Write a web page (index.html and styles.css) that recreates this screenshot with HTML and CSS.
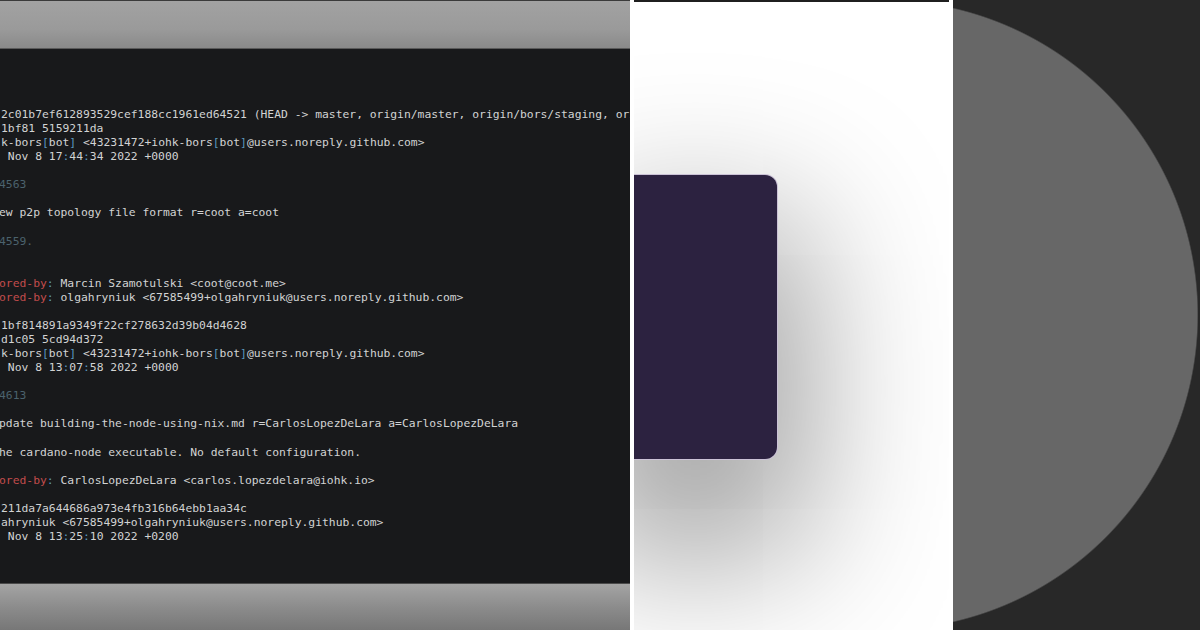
FILE: index.html
```
<!DOCTYPE html>
<html lang="en">
<head>
  <meta charset="UTF-8" />
  <meta name="viewport" content="width=device-width, initial-scale=1.0"/>
  <title>Strip</title>
  <link rel="stylesheet" href="styles.css">
</head>
<body>

  <div class="strip">

    <!-- Terminal shot -->
    <section class="shot term-shot">
      <div class="bar bar-top"></div>
<pre class="term">2c01b7ef612893529cef188cc1961ed64521 (HEAD -&gt; master, origin/master, origin/bors/staging, origin/HEAD)
1bf81 5159211da
k-bors<b>[</b>bot<b>]</b> &lt;43231472+iohk-bors<b>[</b>bot<b>]</b>@users.noreply.github.com&gt;
 Nov 8 17<b>:</b>44<b>:</b>34 2022 +0000

<span class="cut dim">4563</span>

<span class="cut">ew p2p topology file format r=coot a=coot</span>

<span class="cut dim">4559.</span>


<span class="cut"><i>ored-by</i><b>:</b> Marcin Szamotulski &lt;coot@coot.me&gt;</span>
<span class="cut"><i>ored-by</i><b>:</b> olgahryniuk &lt;67585499+olgahryniuk@users.noreply.github.com&gt;</span>

1bf814891a9349f22cf278632d39b04d4628
d1c05 5cd94d372
k-bors<b>[</b>bot<b>]</b> &lt;43231472+iohk-bors<b>[</b>bot<b>]</b>@users.noreply.github.com&gt;
 Nov 8 13<b>:</b>07<b>:</b>58 2022 +0000

<span class="cut dim">4613</span>

<span class="cut">pdate building-the-node-using-nix.md r=CarlosLopezDeLara a=CarlosLopezDeLara</span>

<span class="cut">he cardano-node executable. No default configuration.</span>

<span class="cut"><i>ored-by</i><b>:</b> CarlosLopezDeLara &lt;carlos.lopezdelara@iohk.io&gt;</span>

211da7a644686a973e4fb316b64ebb1aa34c
ahryniuk &lt;67585499+olgahryniuk@users.noreply.github.com&gt;
 Nov 8 13<b>:</b>25<b>:</b>10 2022 +0200</pre>
      <div class="bar bar-bottom"></div>
    </section>

    <!-- Card shot -->
    <section class="shot card-shot">
      <div class="card"></div>
    </section>

    <!-- Disc shot -->
    <section class="shot disc-shot"></section>

  </div>

</body>
</html>
```

FILE: styles.css
```
/* General Styles */
body {
  margin: 0;
  background: #fff;
  font-family: "DejaVu Sans", sans-serif;
}
.strip {
  display: flex;
  height: 630px;
  overflow: hidden;
}
.shot {
  height: 630px;
  overflow: hidden;
}

/* Terminal Shot */
.term-shot {
  width: 630px;
  display: flex;
  flex-direction: column;
  background: #18191b;
}
.bar {
  flex-shrink: 0;
}
.bar-top {
  height: 47px;
  border-top: 1px solid #3a3a3a;
  border-bottom: 1px solid #5a5a5a;
  background: linear-gradient(#a2a2a2, #9a9a9a 60%, #8a8a8a);
}
.bar-bottom {
  height: 46px;
  border-top: 1px solid #4a4a4a;
  background: linear-gradient(#a4a4a4, #8c8c8c 50%, #777);
}
.term {
  flex: 1;
  margin: 0;
  padding: 58px 0 0 1px;
  overflow: hidden;
  font-family: "DejaVu Sans Mono", monospace;
  font-size: 11.35px;
  line-height: 14.07px;
  color: #d2d3d3;
  white-space: pre;
}
.term b {
  font-weight: normal;
  color: #5b97bf;
}
.term i {
  font-style: normal;
  color: #c24c4c;
}
.term .dim {
  color: #4b626d;
}
.term .cut {
  display: inline-block;
  margin-left: -2px;
}

/* Card Shot */
.card-shot {
  width: 315px;
  margin-left: 4px;
  box-sizing: border-box;
  border-top: 2px solid #1f1f1f;
  display: flex;
  align-items: center;
  background: #fff;
}
.card {
  width: 163px;
  height: 284px;
  margin-left: -20px;
  margin-top: 2px;
  flex-shrink: 0;
  border-radius: 12px;
  background: #2c2240;
  box-shadow: 0 0 0 1px #cbc2d6, 0 70px 150px 30px rgba(0,0,0,0.38);
}

/* Disc Shot */
.disc-shot {
  flex: 1;
  margin-left: 4px;
  background: radial-gradient(circle 315px at -70px 50%, #676767 314px, #282828 315.5px);
}
```
